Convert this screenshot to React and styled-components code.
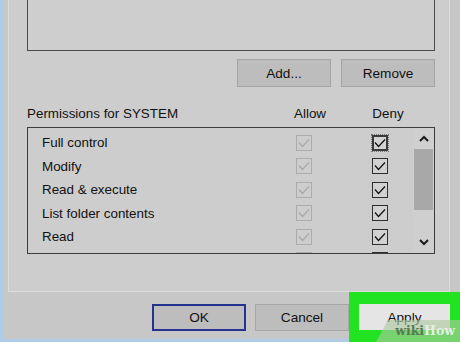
import React from "react";
import styled, { createGlobalStyle } from "styled-components";

const GlobalStyle = createGlobalStyle`
  html, body {
    margin: 0;
    padding: 0;
    background: #c7c7c7;
  }
  * {
    box-sizing: border-box;
  }
`;

const Window = styled.div`
  width: 460px;
  height: 342px;
  display: flex;
  flex-direction: column;
  background: #c7c7c7;
  border-left: 3px solid #aecbe8;
  overflow: hidden;
  font-family: "Liberation Sans", Arial, sans-serif;
  font-size: 13.4px;
  color: #111;
`;

const Panel = styled.div`
  height: 292px;
  margin: 0 10px 0 5px;
  padding: 0 14px 0 18px;
  background: #cdcdcd;
  border: 1px solid #dcdcdc;
  border-top: none;
`;

const GroupList = styled.div`
  height: 51px;
  border: 1px solid #4a4a4a;
  border-top: none;
  background: #cecece;
`;

const ButtonRow = styled.div`
  display: flex;
  justify-content: flex-end;
  gap: 10px;
  margin-top: 8px;
`;

const Button = styled.button`
  width: ${(p) => p.$width || 94}px;
  height: ${(p) => p.$height || 28}px;
  padding: 0;
  font: inherit;
  font-size: 13.6px;
  color: #111;
  background: ${(p) => (p.$light ? "#e5e5e5" : "#bdbdbd")};
  border: ${(p) =>
    p.$default ? "2px solid #23338f" : p.$light ? "1px solid #e5e5e5" : "1px solid #a6a6a6"};
`;

const Header = styled.div`
  display: flex;
  align-items: center;
  height: 20px;
  margin-top: 16px;
  padding-right: 17px;
`;

const HeaderLabel = styled.span`
  flex: 1;
`;

const HeaderCol = styled.span`
  width: 60px;
  text-align: center;
  margin-left: ${(p) => p.$gap || 0}px;
`;

const PermList = styled.div`
  display: flex;
  height: 127px;
  margin-top: 4px;
  border: 1px solid #3c3c3c;
  background: #cdcdcd;
  overflow: hidden;
`;

const Rows = styled.div`
  flex: 1;
  padding-top: 3px;
`;

const Row = styled.div`
  display: grid;
  grid-template-columns: 268px 76px 1fr;
  align-items: center;
  height: 23.5px;
`;

const RowLabel = styled.span`
  padding-left: 14px;
`;

const Box = styled.span`
  display: flex;
  align-items: center;
  justify-content: center;
  width: 16px;
  height: 16px;
  border: ${(p) =>
    p.$disabled ? "1px solid #acacac" : p.$focus ? "2px solid #3a3a3a" : "1px solid #2e2e2e"};
  outline: ${(p) => (p.$focus ? "1px dotted #777" : "none")};
  outline-offset: 0;
  background: ${(p) => (p.$disabled ? "#cdcdcd" : "#d2d2d2")};
`;

const ScrollBar = styled.div`
  width: 21px;
  display: flex;
  flex-direction: column;
  background: #cfcfcf;
`;

const ScrollArrow = styled.div`
  height: 21px;
  display: flex;
  align-items: center;
  justify-content: center;
`;

const Thumb = styled.div`
  height: 61px;
  margin: 0 1px 0 1px;
  background: #a8a8a8;
`;

const ScrollTrack = styled.div`
  flex: 1;
`;

const Footer = styled.div`
  flex: 1;
  display: flex;
`;

const FooterMain = styled.div`
  flex: 1;
  display: flex;
  justify-content: flex-end;
  gap: 9px;
  padding-top: 12px;
  border-bottom: 3px solid #aecbe8;
`;

const Highlight = styled.div`
  position: relative;
  width: 111px;
  padding: 12px 10px;
  background: #22e322;
`;

const Ribbon = styled.div`
  position: absolute;
  left: 27px;
  right: 0;
  bottom: 0;
  height: 22px;
  background: rgba(172, 200, 160, 0.62);
  clip-path: polygon(12px 0, 100% 0, 100% 100%, 0 100%);
`;

const Watermark = styled.span`
  position: absolute;
  right: 5px;
  bottom: 5px;
  font-family: "DejaVu Serif", "Liberation Serif", serif;
  font-weight: bold;
  font-size: 12.5px;
  line-height: 1;
`;

const Wiki = styled.span`
  color: #587a50;
`;

const How = styled.span`
  color: #e4f0e0;
`;

function Check({ color }) {
  return (
    <svg width="12" height="10" viewBox="0 0 12 10">
      <polyline points="1,4.5 4.5,8.5 11,1.5" fill="none" stroke={color} strokeWidth="1.2" />
    </svg>
  );
}

function Chevron({ up }) {
  return (
    <svg width="10" height="7" viewBox="0 0 10 7">
      <polyline
        points={up ? "1,6 5,2 9,6" : "1,1 5,5 9,1"}
        fill="none"
        stroke="#1c1c1c"
        strokeWidth="2"
      />
    </svg>
  );
}

const permissions = [
  "Full control",
  "Modify",
  "Read & execute",
  "List folder contents",
  "Read",
  "Write",
];

export default function App() {
  return (
    <>
      <GlobalStyle />
      <Window>
        <Panel>
          <GroupList />
          <ButtonRow>
            <Button>Add...</Button>
            <Button>Remove</Button>
          </ButtonRow>
          <Header>
            <HeaderLabel>Permissions for SYSTEM</HeaderLabel>
            <HeaderCol>Allow</HeaderCol>
            <HeaderCol $gap={18}>Deny</HeaderCol>
          </Header>
          <PermList>
            <Rows>
              {permissions.map((name, i) => (
                <Row key={name}>
                  <RowLabel>{name}</RowLabel>
                  <Box $disabled>
                    <Check color="#a9a9a9" />
                  </Box>
                  <Box $focus={i === 0}>
                    <Check color="#111" />
                  </Box>
                </Row>
              ))}
            </Rows>
            <ScrollBar>
              <ScrollArrow>
                <Chevron up />
              </ScrollArrow>
              <Thumb />
              <ScrollTrack />
              <ScrollArrow>
                <Chevron />
              </ScrollArrow>
            </ScrollBar>
          </PermList>
        </Panel>
        <Footer>
          <FooterMain>
            <Button $default $height={27}>OK</Button>
            <Button $height={27}>Cancel</Button>
          </FooterMain>
          <Highlight>
            <Button $light $width={91} $height={26}>Apply</Button>
            <Ribbon />
            <Watermark>
              <Wiki>wiki</Wiki>
              <How>How</How>
            </Watermark>
          </Highlight>
        </Footer>
      </Window>
    </>
  );
}
